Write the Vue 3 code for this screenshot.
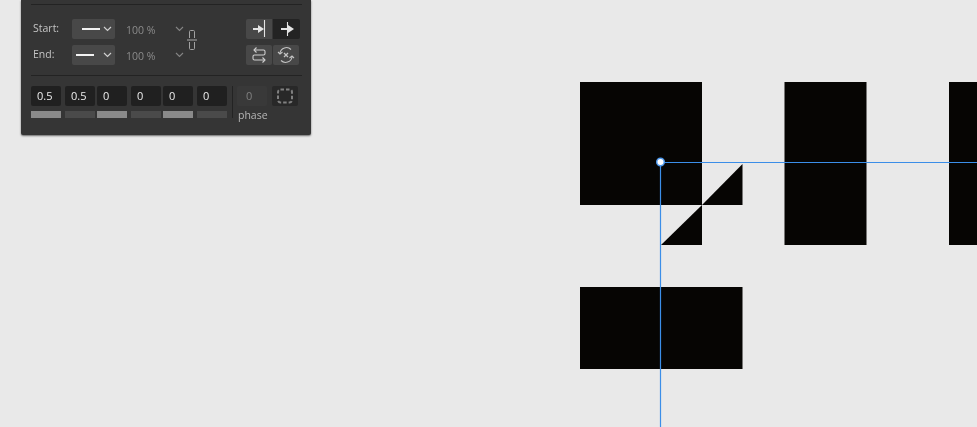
<script setup>
const dashes = [
  { value: "0.5", on: true },
  { value: "0.5", on: false },
  { value: "0", on: true },
  { value: "0", on: false },
  { value: "0", on: true },
  { value: "0", on: false },
];
</script>

<template>
  <div class="canvas">
    <svg class="drawing" width="977" height="427" viewBox="0 0 977 427">
      <g fill="#060503">
        <rect x="580" y="82" width="122" height="123" />
        <polygon points="702,205 742.5,164 742.5,205" />
        <polygon points="661,245 702,205 702,245" />
        <rect x="784.500" y="82" width="82" height="163" />
        <rect x="949" y="82" width="28" height="163" />
        <rect x="580" y="287" width="162.500" height="82" />
      </g>
      <path d="M660.500 427V162.500H977" fill="none" stroke="#3b8ee8" stroke-width="1.200" />
      <circle cx="660.500" cy="162" r="3.800" fill="#fff" stroke="#4b96ea" stroke-width="1.500" />
    </svg>

    <div class="panel">
      <div class="rule first"></div>

      <div class="ends">
        <div class="labels">
          <span>Start:</span>
          <span>End:</span>
        </div>

        <div class="selects">
          <div class="select">
            <i class="dash start"></i>
            <svg width="9" height="6" viewBox="0 0 9 6"><path d="M1 1l3.500 3.500L8 1" fill="none" stroke="#d0d0d0" stroke-width="1.200" /></svg>
          </div>
          <div class="select">
            <i class="dash end"></i>
            <svg width="9" height="6" viewBox="0 0 9 6"><path d="M1 1l3.500 3.500L8 1" fill="none" stroke="#d0d0d0" stroke-width="1.200" /></svg>
          </div>
        </div>

        <div class="scales">
          <div class="scale">
            <span>100 %</span>
            <svg width="9" height="6" viewBox="0 0 9 6"><path d="M1 1l3.500 3.500L8 1" fill="none" stroke="#858585" stroke-width="1.100" /></svg>
          </div>
          <div class="scale">
            <span>100 %</span>
            <svg width="9" height="6" viewBox="0 0 9 6"><path d="M1 1l3.500 3.500L8 1" fill="none" stroke="#858585" stroke-width="1.100" /></svg>
          </div>
        </div>

        <svg class="link" width="12" height="20" viewBox="0 0 12 20">
          <g fill="none" stroke="#a2a2a2">
            <path d="M3.500 8V1.500c0-.6.400-1 1-1h3c.6 0 1 .4 1 1V8" />
            <path d="M3.500 12v6.500c0 .6.400 1 1 1h3c.6 0 1-.4 1-1V12" />
          </g>
          <path d="M1 10h10" stroke="#6f6f6f" stroke-width="2" />
        </svg>

        <div class="buttons">
          <div class="pair">
            <button class="btn joined">
              <svg width="26" height="20" viewBox="0 0 26 20">
                <path d="M7 10h6" stroke="#e4e4e4" stroke-width="2" />
                <path d="M12 6l6 4-6 4z" fill="#e4e4e4" />
                <path d="M18.500 1v17" stroke="#e4e4e4" stroke-width="1.100" />
              </svg>
            </button>
            <button class="btn joined dark">
              <svg width="27" height="20" viewBox="0 0 27 20">
                <path d="M8 10h8" stroke="#e4e4e4" stroke-width="2" />
                <path d="M15 6l6 4-6 4z" fill="#e4e4e4" />
                <path d="M14.500 3v14" stroke="#e4e4e4" stroke-width="1.100" />
              </svg>
            </button>
          </div>
          <div class="pair">
            <button class="btn">
              <svg width="26" height="20" viewBox="0 0 26 20" fill="none" stroke="#cfcfcf" stroke-width="1.100">
                <path d="M8 5h9.500c1 0 1.500.5 1.500 1.500v2c0 1-.5 1.500-1.500 1.500h-9C7.500 10 7 10.500 7 11.500v2C7 14.500 7.500 15 8.500 15H19" />
                <path d="M10.500 2.500L8 5l2.500 2.500M16.500 12.500L19 15l-2.500 2.500" />
              </svg>
            </button>
            <button class="btn">
              <svg width="26" height="20" viewBox="0 0 26 20" fill="none" stroke="#c4c4c4" stroke-width="1.100">
                <path d="M7 8a6.500 6.500 0 0 1 11-3.500M19 12a6.500 6.500 0 0 1-11 3.500" />
                <path d="M5 7l2 2 2.500-2M21 13l-2-2-2.500 2" />
                <path d="M11 8l4 4M15 8l-4 4" stroke-width="1.300" />
              </svg>
            </button>
          </div>
        </div>
      </div>

      <div class="rule second"></div>

      <div class="pattern">
        <div class="dashes">
          <div v-for="(dash, i) in dashes" :key="i" class="cell">
            <div class="field">{{ dash.value }}</div>
            <div class="bar" :class="{ on: dash.on }"></div>
          </div>
        </div>
        <div class="split"></div>
        <div class="phase">
          <div class="field muted">0</div>
          <span>phase</span>
        </div>
        <button class="btn corners">
          <svg width="18" height="16" viewBox="0 0 18 16">
            <rect x="2" y="1.500" width="14" height="13" rx="2.500" fill="none" stroke="#808080" stroke-width="2" stroke-dasharray="3.500 2" />
          </svg>
        </button>
      </div>
    </div>
  </div>
</template>

<style>
html,
body {
  margin: 0;
  background: #e9e9e9;
}
</style>

<style scoped>
.canvas {
  position: relative;
  width: 977px;
  height: 427px;
  overflow: hidden;
  background: #e9e9e9;
  font-family: "Open Sans", "Noto Sans", sans-serif;
}

.drawing {
  position: absolute;
  left: 0;
  top: 0;
}

.panel {
  position: absolute;
  left: 21px;
  top: 0;
  width: 290px;
  height: 135px;
  box-sizing: border-box;
  padding: 4px 9px 0 10px;
  background: #353535;
  border-radius: 0 0 2px 2px;
  box-shadow: 0 1px 2px rgba(0, 0, 0, 0.55);
  color: #c4c4c4;
  font-size: 10.5px;
  will-change: transform;
}

.rule {
  height: 1px;
  background: #232323;
}

.first {
  margin-bottom: 14px;
}

.second {
  margin-top: 10px;
  margin-bottom: 10px;
}

.ends {
  display: flex;
  height: 46px;
}

.labels {
  display: flex;
  flex-direction: column;
  gap: 6px;
  width: 41px;
  padding-left: 2px;
  box-sizing: border-box;
}

.labels span {
  height: 20px;
  line-height: 18px;
}

.selects,
.scales,
.buttons {
  display: flex;
  flex-direction: column;
  gap: 6px;
}

.select {
  display: flex;
  align-items: center;
  justify-content: space-between;
  width: 43px;
  height: 20px;
  box-sizing: border-box;
  padding: 0 3px 0 4px;
  background: #484848;
  border-radius: 2px;
}

.dash {
  display: block;
  height: 2px;
  background: #f2f2f2;
}

.dash.start {
  width: 18px;
  margin-left: 6px;
}

.dash.end {
  width: 18px;
}

.scales {
  width: 65px;
  margin-left: 5px;
}

.scale {
  display: flex;
  align-items: center;
  justify-content: space-between;
  height: 20px;
  padding: 2px 1px 0 6px;
  box-sizing: border-box;
  color: #8b8b8b;
}

.scale svg {
  margin-top: -2px;
}

.link {
  margin: 11px 0 0 1px;
}

.buttons {
  margin-left: 48px;
}

.pair {
  display: flex;
  gap: 1px;
}

.btn {
  display: flex;
  align-items: center;
  justify-content: center;
  width: 26px;
  height: 20px;
  padding: 0;
  border: 0;
  border-radius: 2px;
  background: #484848;
}

.joined {
  border-radius: 2px 0 0 2px;
}

.joined.dark {
  width: 27px;
  background: #232323;
  border-radius: 0 2px 2px 0;
}

.pattern {
  display: flex;
  align-items: flex-start;
}

.dashes {
  display: flex;
  gap: 2px;
}

.cell {
  width: 30px;
}

.cell:nth-child(even) {
  margin-left: 2px;
}

.field {
  height: 20px;
  box-sizing: border-box;
  padding-left: 6px;
  background: #202020;
  border-radius: 2px;
  color: #ececec;
  font-size: 11px;
  line-height: 19px;
}

.bar {
  height: 7px;
  margin-top: 5px;
  background: #4a4a4a;
}

.bar.on {
  background: #8a8a8a;
}

.split {
  width: 1px;
  height: 32px;
  margin-left: 5px;
  background: #232323;
}

.phase {
  width: 30px;
  margin-left: 4px;
}

.field.muted {
  background: #393939;
  padding-left: 9px;
  color: #808080;
}

.phase span {
  display: block;
  margin-top: 1px;
  margin-left: 1px;
  line-height: 16px;
  color: #b6b6b6;
}

.corners {
  margin-left: 5px;
  background: #282828;
}
</style>
